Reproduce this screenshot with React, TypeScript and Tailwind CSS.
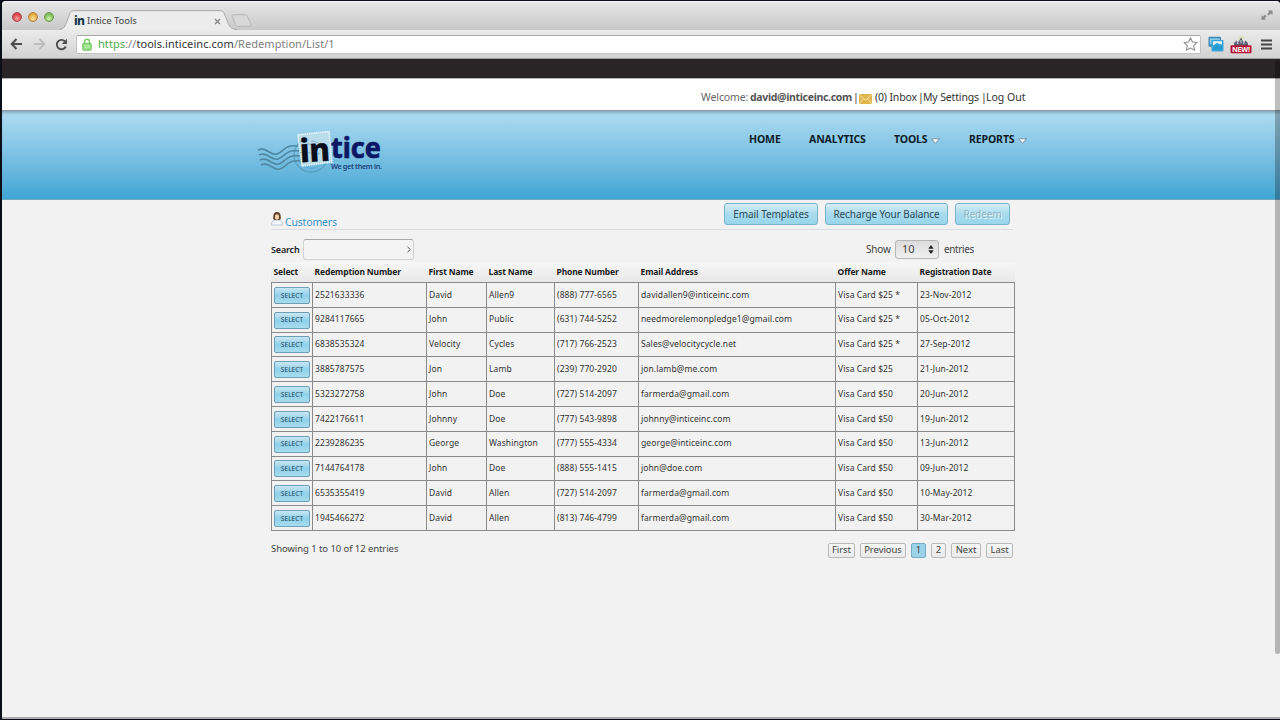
import clsx from "clsx";

const CELL = "flex h-full items-center border-r border-[#8a8a8a] pl-0.5";

const COLUMNS = "grid grid-cols-[41px_114px_60px_68px_84px_197px_82px_97px]";

const HEADINGS = [
  "Select",
  "Redemption Number",
  "First Name",
  "Last Name",
  "Phone Number",
  "Email Address",
  "Offer Name",
  "Registration Date",
];

const CUSTOMERS = [
  ["2521633336", "David", "Allen9", "(888) 777-6565", "davidallen9@inticeinc.com", "Visa Card $25 *", "23-Nov-2012"],
  ["9284117665", "John", "Public", "(631) 744-5252", "needmorelemonpledge1@gmail.com", "Visa Card $25 *", "05-Oct-2012"],
  ["6838535324", "Velocity", "Cycles", "(717) 766-2523", "Sales@velocitycycle.net", "Visa Card $25 *", "27-Sep-2012"],
  ["3885787575", "Jon", "Lamb", "(239) 770-2920", "jon.lamb@me.com", "Visa Card $25", "21-Jun-2012"],
  ["5323272758", "John", "Doe", "(727) 514-2097", "farmerda@gmail.com", "Visa Card $50", "20-Jun-2012"],
  ["7422176611", "Johnny", "Doe", "(777) 543-9898", "johnny@inticeinc.com", "Visa Card $50", "19-Jun-2012"],
  ["2239286235", "George", "Washington", "(777) 555-4334", "george@inticeinc.com", "Visa Card $50", "13-Jun-2012"],
  ["7144764178", "John", "Doe", "(888) 555-1415", "john@doe.com", "Visa Card $50", "09-Jun-2012"],
  ["6535355419", "David", "Allen", "(727) 514-2097", "farmerda@gmail.com", "Visa Card $50", "10-May-2012"],
  ["1945466272", "David", "Allen", "(813) 746-4799", "farmerda@gmail.com", "Visa Card $50", "30-Mar-2012"],
];

const PAGES = [
  { label: "First", width: "w-[27px]" },
  { label: "Previous", width: "w-[46px]" },
  { label: "1", width: "w-[15px]" },
  { label: "2", width: "w-[15px]" },
  { label: "Next", width: "w-[30px]" },
  { label: "Last", width: "w-[27px]" },
];

const TabStrip = () => (
  <div className="flex h-[29px] items-end rounded-t-[4px] border-t border-[#f4f4f4] bg-linear-to-b from-[#e6e6e6] to-[#c9c9c9]">
    <div className="flex h-full items-center gap-[6px] pl-[10px] pt-px">
      <span className="h-[10px] w-[10px] rounded-full border border-[#a3484b] bg-[radial-gradient(circle_at_50%_70%,#f6a5a0,#dd4548_60%)]" />
      <span className="h-[10px] w-[10px] rounded-full border border-[#ac8040] bg-[radial-gradient(circle_at_50%_70%,#fbe3a0,#e9a83f_60%)]" />
      <span className="h-[10px] w-[10px] rounded-full border border-[#6a9552] bg-[radial-gradient(circle_at_50%_70%,#d3f3ae,#7fc257_60%)]" />
    </div>
    <div className="relative ml-[5px] h-[20px] w-[178px]">
      <svg className="absolute inset-0" width="178" height="20" viewBox="0 0 178 20">
        <path
          d="M0 19.5C5 19.5 6 16 8 11L10.500 4C11.500 1.500 12.500 .7 15 .7H161C163.500 .7 164.500 1.500 165.500 4L169 13C170.500 17 173 19.500 178 19.500V20H0Z"
          fill="#ececec"
        />
        <path
          d="M0 19.5C5 19.5 6 16 8 11L10.500 4C11.500 1.500 12.500 .7 15 .7H161C163.500 .7 164.500 1.500 165.500 4L169 13C170.500 17 173 19.500 178 19.500"
          fill="none"
          stroke="#a2a2a2"
          strokeWidth=".9"
        />
      </svg>
      <div className="relative flex h-full items-center pl-[15px] pt-[2px]">
        <span className="w-[13px] text-[12px] font-extrabold leading-none tracking-[-0.8px] text-[#16364b]">in</span>
        <span className="w-[127px] text-[9.500px] leading-none tracking-[-0.050px] text-[#444]">Intice Tools</span>
        <svg width="7" height="7" viewBox="0 0 7 7" stroke="#858585" strokeWidth="1.300">
          <path d="M1 1L6 6M6 1L1 6" />
        </svg>
      </div>
    </div>
    <svg className="mb-[3px] ml-[-6px]" width="22" height="13" viewBox="0 0 22 13">
      <path
        d="M2.500 .7H14C15.500 .7 16 1.200 16.500 2.500L20 10.500C20.500 12 20 12.300 19 12.300H7C5.500 12.300 5 12 4.500 10.500L1.300 2.500C1 1.200 1.200 .7 2.500 .7Z"
        fill="#d8d8d8"
        stroke="#b2b2b2"
        strokeWidth=".9"
      />
    </svg>
    <svg className="mb-[9px] ml-auto mr-[7px]" width="12" height="12" viewBox="0 0 12 12" fill="#888">
      <path d="M6.200 5L8.300 2.900L6.800 1.400H11.500V6L9.900 4.500L7.800 6.600ZM5.600 7.200L3.500 9.300L5 10.800H.5V6.300L2 7.800L4 5.700Z" />
    </svg>
  </div>
);

const Toolbar = () => (
  <div className="flex h-[29px] items-center border-b border-[#999] bg-linear-to-b from-[#ebebeb] to-[#d2d2d2] pl-2 pr-[6px]">
    <svg width="13" height="12" viewBox="0 0 13 12" fill="none" stroke="#4d4d4d" strokeWidth="2">
      <path d="M12 6H2M6.500 1L1.700 6L6.500 11" />
    </svg>
    <svg className="ml-[10px]" width="13" height="12" viewBox="0 0 13 12" fill="none" stroke="#bdbdbd" strokeWidth="2">
      <path d="M1 6H11M6.500 1L11.300 6L6.500 11" />
    </svg>
    <svg className="ml-[9px]" width="13" height="13" viewBox="0 0 13 13" fill="none" stroke="#4d4d4d" strokeWidth="1.900">
      <path d="M10.800 8.500A4.700 4.700 0 1 1 9.800 3.200" />
      <path d="M12 .8V6H6.800Z" fill="#4d4d4d" stroke="none" />
    </svg>
    <div className="ml-[8px] flex h-[19px] w-[1125px] shrink-0 items-center rounded-[2px] border border-[#c2c2c2] border-t-[#a8a8a8] bg-white pl-[5px] pr-[2px]">
      <svg width="10" height="13" viewBox="0 0 10 13">
        <path d="M2.500 6V3.700A2.500 2.500 0 0 1 7.500 3.700V6" fill="none" stroke="#7ccf6b" strokeWidth="1.500" />
        <rect x=".7" y="5.300" width="8.600" height="7" rx="1" fill="#93dd82" stroke="#62b753" strokeWidth=".8" />
        <path d="M2 7.800H8M2 9.700H8" stroke="#c8f2bd" strokeWidth=".7" />
      </svg>
      <span className="ml-[6px] text-[11px] tracking-[0.060px] text-[#808080]">
        <span className="text-[#4fae4b]">https</span>://
        <span className="text-[#333]">tools.inticeinc.com</span>/Redemption/List/1
      </span>
      <svg className="ml-auto" width="15" height="14" viewBox="0 0 15 14" fill="#fff" stroke="#929292" strokeWidth="1.100" strokeLinejoin="round">
        <path d="M7.500 .8L9.500 5L14 5.500L10.600 8.600L11.600 13.200L7.500 10.900L3.400 13.200L4.400 8.600L1 5.500L5.500 5Z" />
      </svg>
    </div>
    <svg className="ml-[7px]" width="16" height="16" viewBox="0 0 16 16">
      <rect x=".5" y=".8" width="12.500" height="10" rx="1" fill="#3f86b3" />
      <rect x="1.800" y="2.300" width="10" height="6" fill="#8bc9e6" />
      <rect x="3.500" y="4" width="12" height="11.500" rx="1" fill="#3aa6d7" />
      <path d="M5 5.200H14V8.500L11.500 8L9 6.800L5 9.500Z" fill="#e7f5fb" />
      <path d="M5 11L9 8.500L11.500 10L14 9V14H5Z" fill="#219bd0" />
    </svg>
    <svg className="ml-[6px]" width="22" height="20" viewBox="0 0 22 20">
      <circle cx="11" cy="4" r="2.800" fill="#dfe0c3" />
      <path d="M4 12V9L6.500 6.500L8.500 8L11 3.500L13.500 8L15.500 6.500L18 9V12Z" fill="#5d6470" />
      <path d="M7 7L8 10M14.500 7L13.500 10M11 6V9" stroke="#c8ced8" strokeWidth="1.100" />
      <rect x=".5" y="11.300" width="21" height="8" rx="1" fill="#b50f35" />
      <text x="11" y="18" textAnchor="middle" fill="#fff" fontSize="7.200" fontWeight="700" textLength="18">NEW!</text>
    </svg>
    <svg className="ml-[9px]" width="11" height="11" viewBox="0 0 11 11" stroke="#444" strokeWidth="2">
      <path d="M0 1.500H11M0 5.500H11M0 9.500H11" />
    </svg>
  </div>
);

const Envelope = () => (
  <svg className="ml-[4px] mt-[2px] shrink-0" width="13" height="10" viewBox="0 0 13 10">
    <rect width="13" height="10" rx="1" fill="#dfb54e" />
    <path d="M.5 1L6.500 6L12.500 1M.5 9.500L4.500 4.500M12.500 9.500L8.500 4.500" fill="none" stroke="#f8e3a0" strokeWidth="1" />
  </svg>
);

const AccountBar = () => (
  <div className="flex h-[33px] items-center whitespace-nowrap border-b border-t border-b-[#8e9499] border-t-[#b5b3b3] bg-white pl-[699px] pt-[6px] text-[10.500px] text-[#333]">
    <span className="w-[49px] tracking-[-0.100px] text-[#666]">Welcome:</span>
    <span className="w-[103px] font-bold tracking-[-0.320px] text-[#555]">david@inticeinc.com</span>
    <span className="w-[2px]">|</span>
    <Envelope />
    <span className="ml-[3px] w-[43px] tracking-[-0.150px]">(0) Inbox</span>
    <span className="w-[5px]">|</span>
    <span className="w-[58px] tracking-[-0.150px]">My Settings</span>
    <span className="w-[5px]">|</span>
    <span>Log Out</span>
  </div>
);

const Logo = () => (
  <svg className="overflow-visible" width="128" height="46" viewBox="0 0 128 46">
    <g fill="none" stroke="#4f89a3" strokeWidth="1.600">
      <path d="M2 21C10 17 14 27 21 25S28 15 42 17" />
      <path d="M3 26C11 22 15 32 22 30S29 20 43 22" />
      <path d="M4 31C12 27 16 37 23 35S30 25 44 27" />
      <path d="M5 36C13 32 17 42 24 40S31 30 45 32" />
      <circle cx="55" cy="26" r="17" strokeWidth="1.300" opacity=".55" />
      <circle cx="55" cy="26" r="13.500" strokeWidth=".8" opacity=".4" />
    </g>
    <path d="M42 6L73 2.500L76 33L46 37Z" fill="#b9dcea" stroke="#eef8fc" strokeWidth="1.500" strokeDasharray="1.500 .7" />
    <g fill="none" stroke="#6d9fb6" strokeWidth="1" opacity=".6">
      <path d="M43 13C49 11 53 17 61 16M44 24C51 20 57 28 64 24" />
      <path d="M55 12A14 14 0 0 1 68 31" />
    </g>
    <text x="44" y="32.500" fontSize="32" fontWeight="800" fill="#080c1b" stroke="#080c1b" strokeWidth=".5" textLength="30" lengthAdjust="spacingAndGlyphs" transform="rotate(-3 58 25)">in</text>
    <text x="75" y="28.500" fontSize="29" fontWeight="700" fill="#0d1765" stroke="#0d1765" strokeWidth=".7" textLength="50" lengthAdjust="spacingAndGlyphs">tice</text>
    <text x="75" y="40" fontSize="7.300" fontWeight="600" fill="#20417d" textLength="51">We get them in.</text>
  </svg>
);

const MenuArrow = () => (
  <svg className="ml-[3px] mt-[2px] shrink-0" width="9" height="6" viewBox="0 0 9 6">
    <path d="M.7 .8H8.300L4.500 5.300Z" fill="#fff" stroke="#6d828c" strokeWidth=".8" />
  </svg>
);

const Banner = () => (
  <div className="flex h-[89px] items-start border-b border-[#72a9c2] bg-linear-to-b from-[#afdcf1] to-[#3fa5d5] pl-[254px] pt-[18px] shadow-[inset_0_3px_3px_-1px_#86abc0]">
    <Logo />
    <nav className="ml-[365px] flex pt-[3px] text-[10.500px] font-bold tracking-[-0.120px] text-[#0b1c28]">
      <span className="w-[60px]">HOME</span>
      <span className="w-[85px]">ANALYTICS</span>
      <span className="flex w-[75px] items-center">
        TOOLS
        <MenuArrow />
      </span>
      <span className="flex items-center">
        REPORTS
        <MenuArrow />
      </span>
    </nav>
  </div>
);

const ActionButton = ({ label, width, disabled }: { label: string; width: string; disabled?: boolean }) => (
  <button
    className={clsx(
      "flex h-[22px] items-center justify-center whitespace-nowrap rounded-[3px] border border-[#79b4ca] bg-linear-to-b from-[#d7edf6] via-[#a9dbed] to-[#98d5eb] text-[10px] tracking-[-0.080px]",
      width,
      disabled ? "text-[#8fb4c2] [text-shadow:1px_1px_0_#e5f5fb]" : "text-[#2c4b58]"
    )}
  >
    {label}
  </button>
);

const PageTitle = () => (
  <div className="flex h-[30px] w-[742px] items-end justify-between border-b border-[#d9dce0]">
    <div className="flex items-end">
      <svg className="mb-[3px]" width="12" height="15" viewBox="0 0 12 15">
        <path d="M.7 14V12C1 10 3 9 6 9S11 10 11.300 12V14Z" fill="#f5f8fc" stroke="#a9bbd0" strokeWidth=".8" />
        <path d="M2.200 8C2 3.500 3 1 6 1S10 3.500 9.800 8L8.500 9H3.500Z" fill="#66442b" />
        <ellipse cx="6" cy="6" rx="2" ry="2.800" fill="#f4d4b0" />
      </svg>
      <h1 className="ml-[2px] text-[10.500px] leading-[14px] tracking-[-0.180px] text-[#3b93c8]">Customers</h1>
    </div>
    <div className="flex gap-[7px] pb-[4px] pr-[3px]">
      <ActionButton label="Email Templates" width="w-[94px]" />
      <ActionButton label="Recharge Your Balance" width="w-[123px]" />
      <ActionButton label="Redeem" width="w-[55px]" disabled />
    </div>
  </div>
);

const TableTools = () => (
  <div className="flex h-[32px] items-center pt-[7px] text-[10px] text-[#444]">
    <span className="w-[32px] text-[9px] font-semibold tracking-[-0.150px] text-[#222]">Search</span>
    <div className="flex h-[21px] w-[111px] items-center justify-end rounded-[3px] border border-[#d2d2d2] border-t-[#a9a9a9] bg-[#f4f4f4] pr-[2px]">
      <svg width="4" height="7" viewBox="0 0 4 7" fill="none" stroke="#555" strokeWidth="1">
        <path d="M.5 .8L3.300 3.500L.5 6.200" />
      </svg>
    </div>
    <span className="ml-[452px] w-[29px] tracking-[-0.200px]">Show</span>
    <div className="flex h-[19px] w-[44px] items-center justify-between rounded-[3px] border border-[#b5b5b5] bg-linear-to-b from-[#dcdcdc] to-[#f0f0f0] pl-[6px] pr-[4px] text-[11px]">
      10
      <svg width="6" height="9" viewBox="0 0 6 9" fill="#222">
        <path d="M3 0L5.700 3.700H.3ZM3 9L5.700 5.300H.3Z" />
      </svg>
    </div>
    <span className="ml-[5px] tracking-[-0.400px]">entries</span>
  </div>
);

const CustomerTable = () => (
  <div className="w-[744px] text-[8.500px] tracking-[0.090px] text-[#333]">
    <div className={clsx(COLUMNS, "h-[20px] items-center bg-linear-to-b from-[#f7f7f7] to-[#e8e8e8] font-bold tracking-[-0.160px] text-[#1d1d1d]")}>
      {HEADINGS.map((heading) => (
        <span key={heading} className="whitespace-nowrap pl-[2.600px]">
          {heading}
        </span>
      ))}
    </div>
    <div className="grid h-[249px] grid-rows-10 border-l border-t border-[#8a8a8a]">
      {CUSTOMERS.map((customer) => (
        <div key={customer[0]} className={clsx(COLUMNS, "items-center border-b border-[#8a8a8a]")}>
          <div className={clsx(CELL, "pt-px")}>
            <button className="flex h-[17px] w-[36px] items-center justify-center rounded-[2px] border border-[#6da0b7] bg-linear-to-b from-[#c9e7f3] via-[#8fd0ea] to-[#a8dcef] text-[6.500px] text-[#24465a]">
              SELECT
            </button>
          </div>
          {customer.map((value, i) => (
            <div key={i} className={clsx(CELL, "whitespace-nowrap")}>
              {value}
            </div>
          ))}
        </div>
      ))}
    </div>
  </div>
);

const TableFooter = () => (
  <div className="flex w-[744px] items-start justify-between pt-[11px] text-[9.500px] text-[#444]">
    <span className="tracking-[-0.070px]">Showing 1 to 10 of 12 entries</span>
    <div className="flex gap-[5px] pr-[2px] pt-px">
      {PAGES.map(({ label, width }) => (
        <button
          key={label}
          className={clsx(
            "flex h-[15px] items-center justify-center rounded-[2px] border tracking-[-0.050px]",
            width,
            label === "1" ? "border-[#78aabf] bg-[#9dd3ea]" : "border-[#b9b9b9] bg-linear-to-b from-[#f7f7f7] to-[#e9e9e9]"
          )}
        >
          {label}
        </button>
      ))}
    </div>
  </div>
);

export default function App() {
  return (
    <div className="h-[720px] w-[1280px] overflow-hidden bg-[#0b0e17] pl-[2px] pt-px font-['Noto_Sans','Open_Sans',sans-serif]">
      <div className="relative flex h-[718px] flex-col rounded-t-[4px] border-b-2 border-[#aaa] bg-[#f2f2f2]">
        <TabStrip />
        <Toolbar />
        <div className="h-[19px] bg-[#292526]" />
        <AccountBar />
        <Banner />
        <main className="pl-[269px]">
          <PageTitle />
          <TableTools />
          <CustomerTable />
          <TableFooter />
        </main>
        <div className="absolute right-0 top-[59px] h-[594px] w-[5px] rounded-full bg-black/25" />
      </div>
    </div>
  );
}
